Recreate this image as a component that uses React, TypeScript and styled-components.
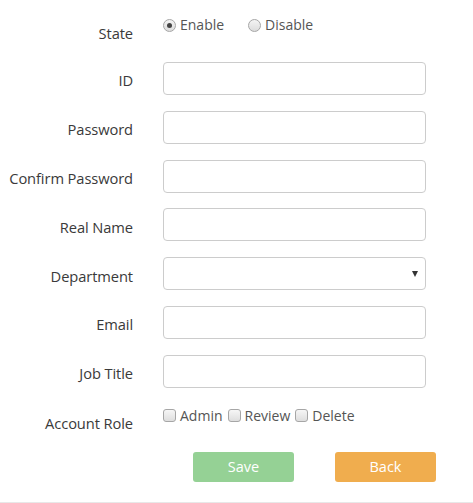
import { createGlobalStyle } from "styled-components"
import styled from "styled-components"

const GlobalStyle = createGlobalStyle`
	html, body {
		margin: 0;
		padding: 0;
		background: #fff;
	}
	body {
		font-family: "Open Sans", "Noto Sans", Arial, sans-serif;
		font-size: 14px;
		color: #333;
	}
`

const Page = styled.div`
	width: 473px;
	height: 503px;
	box-sizing: border-box;
	padding-top: 13.2px;
	border-bottom: 1px solid #e8e8e8;
`

const Row = styled.div`
	display: grid;
	grid-template-columns: 133px 263px;
	column-gap: 30px;
	height: 33px;
	margin-bottom: 15.8px;
`

const Label = styled.label<{ $top?: number }>`
	text-align: right;
	line-height: 20px;
	font-size: 14.7px;
	letter-spacing: -0.1px;
	padding-top: ${({ $top }) => $top ?? 8.5}px;
	color: #3a3a3a;
	white-space: nowrap;
`

const Input = styled.input`
	box-sizing: border-box;
	width: 263px;
	height: 33px;
	border: 1px solid #ccc;
	border-radius: 4px;
	padding: 6px 10px;
	font: inherit;
	outline: none;
	background: #fff;
`

const SelectBox = styled.div`
	box-sizing: border-box;
	width: 263px;
	height: 33px;
	border: 1px solid #ccc;
	border-radius: 4px;
	display: flex;
	align-items: center;
	justify-content: flex-end;
	padding-right: 7px;
	background: #fff;
`

const Caret = styled.span`
	width: 0;
	height: 0;
	border-left: 3.5px solid transparent;
	border-right: 3.5px solid transparent;
	border-top: 6px solid #333;
	margin-top: 1px;
`

const ChoiceGroup = styled.div`
	display: flex;
	align-items: center;
	height: 20px;
	padding-top: 2px;
	color: #555;
`

const Choice = styled.label<{ $gap: number }>`
	display: flex;
	align-items: center;
	margin-right: ${({ $gap }) => $gap}px;
	line-height: 20px;
`

const Radio = styled.span<{ $checked?: boolean }>`
	box-sizing: border-box;
	width: 13px;
	height: 13px;
	border-radius: 50%;
	border: 1px solid #a6a6a6;
	background: linear-gradient(#f4f4f4, #dcdcdc);
	margin-right: 4px;
	display: flex;
	align-items: center;
	justify-content: center;

	&::after {
		content: "";
		display: ${({ $checked }) => ($checked ? "block" : "none")};
		width: 5px;
		height: 5px;
		border-radius: 50%;
		background: #444;
	}
`

const Check = styled.span`
	box-sizing: border-box;
	width: 13px;
	height: 13px;
	border-radius: 3px;
	border: 1px solid #a6a6a6;
	background: linear-gradient(#f6f6f6, #dedede);
	margin-right: 4px;
`

const Actions = styled.div`
	display: flex;
	padding-left: 193px;
	gap: 41px;
	margin-top: -0.6px;
`

const Button = styled.button<{ $tone: "save" | "back" }>`
	width: 101px;
	height: 30px;
	border: none;
	border-radius: 3px;
	color: #fff;
	font: inherit;
	font-size: 14.5px;
	background: ${({ $tone }) => ($tone === "save" ? "#95d195" : "#f0ad4e")};
	cursor: pointer;
`

const fields = ["ID", "Password", "Confirm Password", "Real Name"]

export default function App() {
	return (
		<>
			<GlobalStyle />
			<Page>
				<Row>
					<Label $top={9.5}>State</Label>
					<ChoiceGroup>
						<Choice $gap={24}>
							<Radio $checked />
							Enable
						</Choice>
						<Choice $gap={0}>
							<Radio />
							Disable
						</Choice>
					</ChoiceGroup>
				</Row>
				{fields.map((f) => (
					<Row key={f}>
						<Label>{f}</Label>
						<Input type={f.includes("Password") ? "password" : "text"} />
					</Row>
				))}
				<Row>
					<Label>Department</Label>
					<SelectBox>
						<Caret />
					</SelectBox>
				</Row>
				<Row>
					<Label>Email</Label>
					<Input />
				</Row>
				<Row>
					<Label>Job Title</Label>
					<Input />
				</Row>
				<Row>
					<Label $top={9}>Account Role</Label>
					<ChoiceGroup>
						<Choice $gap={5}>
							<Check />
							Admin
						</Choice>
						<Choice $gap={5}>
							<Check />
							Review
						</Choice>
						<Choice $gap={0}>
							<Check />
							Delete
						</Choice>
					</ChoiceGroup>
				</Row>
				<Actions>
					<Button $tone="save">Save</Button>
					<Button $tone="back">Back</Button>
				</Actions>
			</Page>
		</>
	)
}
